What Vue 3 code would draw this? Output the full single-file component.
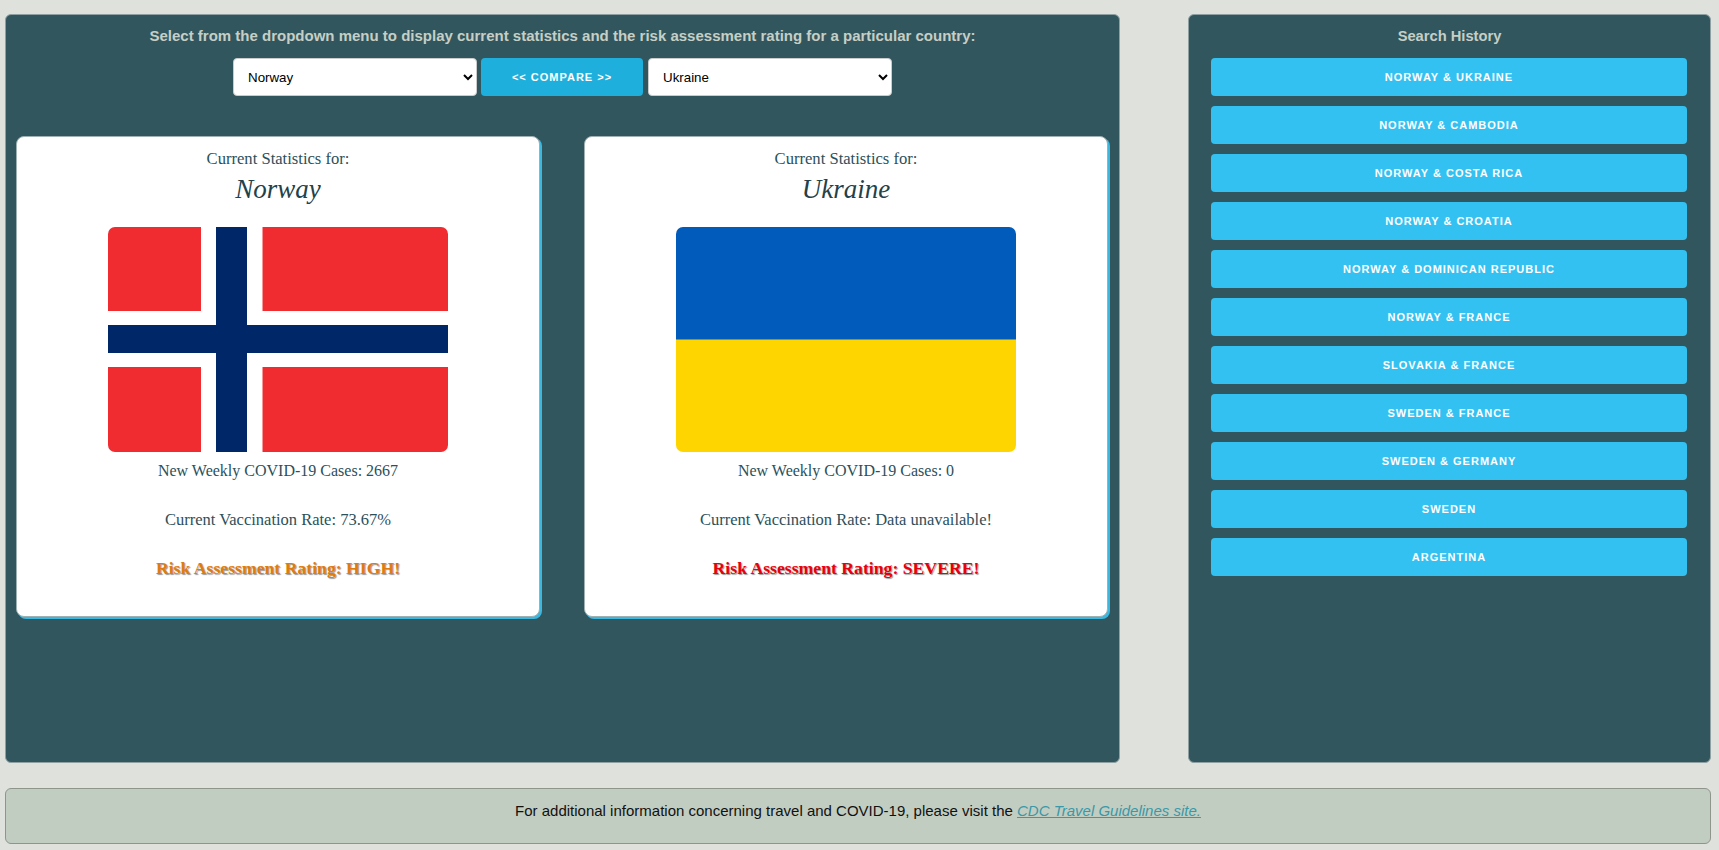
<script setup>
import { ref } from 'vue'

const countries = ['Argentina', 'Cambodia', 'Costa Rica', 'Croatia', 'Dominican Republic', 'France', 'Germany', 'Norway', 'Slovakia', 'Sweden', 'Ukraine']
const left = ref('Norway')
const right = ref('Ukraine')

const history = [
  'Norway & Ukraine',
  'Norway & Cambodia',
  'Norway & Costa Rica',
  'Norway & Croatia',
  'Norway & Dominican Republic',
  'Norway & France',
  'Slovakia & France',
  'Sweden & France',
  'Sweden & Germany',
  'Sweden',
  'Argentina',
]
</script>

<template>
  <div class="page">
    <div class="columns">
      <main class="panel main">
        <h2 class="heading">Select from the dropdown menu to display current statistics and the risk assessment rating for a particular country:</h2>
        <div class="controls">
          <select v-model="left" class="picker">
            <option v-for="c in countries" :key="c">{{ c }}</option>
          </select>
          <button class="compare">&lt;&lt; Compare &gt;&gt;</button>
          <select v-model="right" class="picker">
            <option v-for="c in countries" :key="c">{{ c }}</option>
          </select>
        </div>

        <div class="cards">
          <section class="card">
            <p class="label">Current Statistics for:</p>
            <h3 class="country">Norway</h3>
            <svg class="flag" viewBox="0 0 340 225">
              <rect width="340" height="225" fill="#f02c30" />
              <rect x="93" width="61.5" height="225" fill="#fff" />
              <rect y="84" width="340" height="56" fill="#fff" />
              <rect x="108" width="31" height="225" fill="#002868" />
              <rect y="98" width="340" height="28" fill="#002868" />
            </svg>
            <p class="stat first">New Weekly COVID-19 Cases: 2667</p>
            <p class="stat">Current Vaccination Rate: 73.67%</p>
            <p class="stat risk high">Risk Assessment Rating: HIGH!</p>
          </section>

          <section class="card">
            <p class="label">Current Statistics for:</p>
            <h3 class="country">Ukraine</h3>
            <svg class="flag" viewBox="0 0 340 225">
              <rect width="340" height="113" fill="#005bbb" />
              <rect y="112.5" width="340" height="112.5" fill="#ffd500" />
            </svg>
            <p class="stat first">New Weekly COVID-19 Cases: 0</p>
            <p class="stat">Current Vaccination Rate: Data unavailable!</p>
            <p class="stat risk severe">Risk Assessment Rating: SEVERE!</p>
          </section>
        </div>
      </main>

      <aside class="panel side">
        <h2 class="heading side-heading">Search History</h2>
        <div class="history">
          <button v-for="item in history" :key="item" class="history-btn">{{ item }}</button>
        </div>
      </aside>
    </div>

    <footer class="footer">
      For additional information concerning travel and COVID-19, please visit the
      <a href="#" class="link">CDC Travel Guidelines site.</a>
    </footer>
  </div>
</template>

<style>
html, body {
  margin: 0;
  background: #dfe1dc;
  overflow: hidden;
}
</style>

<style scoped>
.page {
  box-sizing: border-box;
  width: 1719px;
  height: 850px;
  padding: 14px 8px 0 5px;
  background: #dfe1dc;
  font-family: "Liberation Sans", Arial, sans-serif;
}

.columns {
  display: grid;
  grid-template-columns: 1115px 523px;
  gap: 68px;
  height: 749px;
}

.panel {
  box-sizing: border-box;
  background: #32565e;
  border: 1px solid #8fa0a2;
  border-radius: 6px;
}

.heading {
  margin: 0;
  padding-top: 10px;
  font-size: 15px;
  line-height: 22px;
  font-weight: 700;
  text-align: center;
  color: #c6cfc5;
}

.side-heading {
  font-size: 14.7px;
}

.controls {
  display: flex;
  justify-content: center;
  gap: 4px;
  margin-top: 11px;
}

.picker {
  box-sizing: border-box;
  width: 244px;
  height: 38px;
  padding: 0 10px;
  background: #fff;
  color: #000;
  border: 1px solid #c8cccc;
  border-radius: 4px;
  font-family: "Liberation Sans", Arial, sans-serif;
  font-size: 13.33px;
}

.compare {
  width: 162px;
  height: 38px;
  margin-right: 1px;
  padding: 0;
  border: 0;
  border-radius: 4px;
  background: #1fafdd;
  color: #fff;
  font-family: "Liberation Sans", Arial, sans-serif;
  font-size: 11px;
  font-weight: 700;
  letter-spacing: 1px;
  text-transform: uppercase;
}

.cards {
  display: grid;
  grid-template-columns: 524px 524px;
  gap: 44px;
  margin-top: 40px;
  padding: 0 10px;
}

.card {
  box-sizing: border-box;
  height: 481px;
  padding-top: 11px;
  background: #fff;
  border: 1px solid #9fb0b2;
  border-radius: 8px;
  box-shadow: 2px 2px 0 #3bb8e0;
  text-align: center;
  font-family: "Liberation Serif", Georgia, serif;
  color: #2c505a;
}

.label {
  margin: 0;
  font-size: 16.6px;
  line-height: 22px;
}

.country {
  margin: 4px 0 0;
  font-size: 27px;
  line-height: 30px;
  font-weight: 400;
  font-style: italic;
  color: #22414a;
}

.flag {
  display: block;
  width: 340px;
  height: 225px;
  margin: 23px auto 0;
  border-radius: 7px;
}

.stat {
  margin: 27px 0 0;
  font-size: 16.5px;
  line-height: 22px;
}

.stat.first {
  margin-top: 8px;
  font-size: 16px;
}

.stat.risk {
  margin-top: 26px;
  font-weight: 700;
  font-size: 17.7px;
  text-shadow: 1px 1px 1px #999;
}

.high {
  color: #e07b10;
}

.severe {
  color: #e8000c;
}

.history {
  display: flex;
  flex-direction: column;
  gap: 10px;
  margin-top: 11px;
  padding: 0 23px 0 22px;
}

.history-btn {
  height: 38px;
  padding: 0;
  border: 0;
  border-radius: 4px;
  background: #33c1f2;
  color: #fff;
  font-family: "Liberation Sans", Arial, sans-serif;
  font-size: 11px;
  font-weight: 700;
  letter-spacing: 1px;
  text-transform: uppercase;
}

.footer {
  box-sizing: border-box;
  height: 56px;
  margin-top: 25px;
  padding-top: 12px;
  background: #c2cdc1;
  border: 1px solid #8f958b;
  border-radius: 6px;
  text-align: center;
  font-size: 15px;
  line-height: 20px;
  color: #111;
}

.link {
  color: #3a98a8;
  font-style: italic;
  text-decoration: underline;
}
</style>
